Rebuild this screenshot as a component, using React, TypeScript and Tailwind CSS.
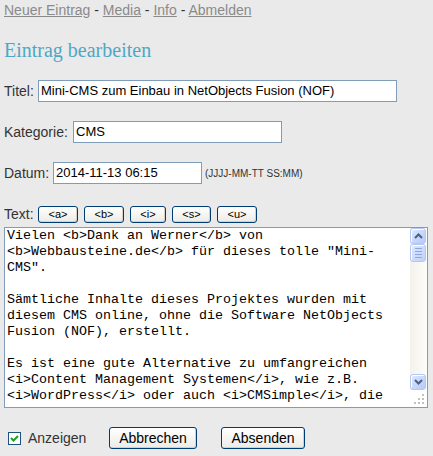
import React from "react";

const body = [
  "Vielen <b>Dank an Werner</b> von",
  '<b>Webbausteine.de</b> für dieses tolle "Mini-',
  'CMS".',
  "",
  "Sämtliche Inhalte dieses Projektes wurden mit",
  "diesem CMS online, ohne die Software NetObjects",
  "Fusion (NOF), erstellt.",
  "",
  "Es ist eine gute Alternative zu umfangreichen",
  "<i>Content Management Systemen</i>, wie z.B.",
  "<i>WordPress</i> oder auch <i>CMSimple</i>, die",
];

function Chevron({ up }: { up?: boolean }) {
  return (
    <svg width="9" height="6" viewBox="0 0 9 6">
      <polyline
        points={up ? "1,5 4.5,1.5 8,5" : "1,1 4.5,4.5 8,1"}
        fill="none"
        stroke="#4d6185"
        strokeWidth="2"
      />
    </svg>
  );
}

function ScrollButton({ up }: { up?: boolean }) {
  return (
    <div className="flex h-[16px] w-[16px] items-center justify-center rounded-[3px] border border-[#b4c8f6] bg-gradient-to-br from-[#dde7fe] to-[#b6c9f6] shadow-[inset_1px_1px_0_#ffffff]">
      <Chevron up={up} />
    </div>
  );
}

function XpButton({ label, className }: { label: string; className: string }) {
  return (
    <button
      type="button"
      className={
        "flex items-center justify-center rounded-[3px] border border-[#003c74] bg-gradient-to-b from-[#ffffff] to-[#ecebe6] text-black shadow-[inset_-1px_-1px_0_#d6d0c5] " +
        className
      }
    >
      {label}
    </button>
  );
}

function Field({
  label,
  labelWidth,
  value,
  inputWidth,
}: {
  label: string;
  labelWidth: string;
  value: string;
  inputWidth: string;
}) {
  return (
    <div className="flex h-[22px] items-center">
      <span className={"shrink-0 " + labelWidth}>{label}</span>
      <div
        className={
          "flex h-[22px] items-center border border-[#7f9db9] bg-white pl-[2px] text-[13px] text-black " +
          inputWidth
        }
      >
        {value}
      </div>
    </div>
  );
}

export default function App() {
  const links = ["Neuer Eintrag", "Media", "Info", "Abmelden"];
  return (
    <div className="min-h-screen bg-[#eaeaea] pl-[4px] pt-[2px] font-['Liberation_Sans',Arial,sans-serif] text-[14px] text-[#333333]">
      <nav className="leading-[16px]">
        {links.map((l, i) => (
          <React.Fragment key={l}>
            {i > 0 && <span className="text-[#333333]"> - </span>}
            <a className="cursor-pointer text-[#8a8a8a] underline">{l}</a>
          </React.Fragment>
        ))}
      </nav>

      <h1 className="mt-[20px] font-['Liberation_Serif','Times_New_Roman',serif] text-[20px] leading-[24px] text-[#4ea8c5]">
        Eintrag bearbeiten
      </h1>

      <div className="mt-[18px] flex flex-col gap-[19px]">
        <Field
          label="Titel:"
          labelWidth="w-[34px]"
          value="Mini-CMS zum Einbau in NetObjects Fusion (NOF)"
          inputWidth="w-[359px]"
        />
        <Field label="Kategorie:" labelWidth="w-[69px]" value="CMS" inputWidth="w-[209px]" />
        <div className="flex items-center">
          <Field
            label="Datum:"
            labelWidth="w-[49px]"
            value="2014-11-13 06:15"
            inputWidth="w-[149px]"
          />
          <span className="ml-[3px] text-[10px] text-[#333333]">(JJJJ-MM-TT SS:MM)</span>
        </div>
      </div>

      <div className="mt-[22px] flex h-[17px] items-center">
        <span className="w-[34px] shrink-0">Text:</span>
        <div className="flex gap-[6px] text-[11px] leading-none">
          <XpButton label="<a>" className="h-[17px] w-[40px]" />
          <XpButton label="<b>" className="h-[17px] w-[40px]" />
          <XpButton label="<i>" className="h-[17px] w-[36px]" />
          <XpButton label="<s>" className="h-[17px] w-[39px]" />
          <XpButton label="<u>" className="h-[17px] w-[40px]" />
        </div>
      </div>

      <div className="mt-[4px] flex h-[181px] w-[424px] border border-[#7f9db9] bg-white">
        <div className="flex-1 overflow-hidden pl-[2px] font-['Liberation_Mono','Courier_New',monospace] text-[13.33px] leading-[16px] text-black">
          {body.map((line, i) => (
            <div key={i} className="h-[16px] whitespace-pre">
              {line}
            </div>
          ))}
        </div>
        <div className="flex w-[17px] shrink-0 flex-col">
          <div className="flex flex-1 flex-col bg-gradient-to-r from-[#f3f1ea] to-[#fdfdfa]">
            <ScrollButton up />
            <div className="flex h-[18px] w-[16px] flex-col items-center justify-center gap-[2px] rounded-[3px] border border-[#b4c8f6] bg-gradient-to-br from-[#dde7fe] to-[#c0d1f8] shadow-[inset_1px_1px_0_#ffffff]">
              <div className="h-px w-[7px] bg-[#8ea6e6]" />
              <div className="h-px w-[7px] bg-[#8ea6e6]" />
              <div className="h-px w-[7px] bg-[#8ea6e6]" />
              <div className="h-px w-[7px] bg-[#8ea6e6]" />
            </div>
            <div className="flex-1" />
            <ScrollButton />
          </div>
          <div className="flex h-[17px] items-end justify-end pb-[3px] pr-[3px]">
            <svg width="10" height="10" viewBox="0 0 10 10">
              <rect x="8" y="0" width="2" height="2" fill="#c4c2b8" />
              <rect x="4" y="4" width="2" height="2" fill="#c4c2b8" />
              <rect x="8" y="4" width="2" height="2" fill="#c4c2b8" />
              <rect x="0" y="8" width="2" height="2" fill="#c4c2b8" />
              <rect x="4" y="8" width="2" height="2" fill="#c4c2b8" />
              <rect x="8" y="8" width="2" height="2" fill="#c4c2b8" />
            </svg>
          </div>
        </div>
      </div>

      <div className="mt-[19px] flex h-[22px] items-center">
        <span className="ml-[4px] flex h-[13px] w-[13px] items-center justify-center border border-[#1c5180] bg-white">
          <svg width="9" height="9" viewBox="0 0 9 9">
            <polyline points="1,4 3.5,6.5 8,2" fill="none" stroke="#21a121" strokeWidth="2" />
          </svg>
        </span>
        <span className="ml-[7px] w-[81px]">Anzeigen</span>
        <XpButton label="Abbrechen" className="h-[22px] w-[88px] text-[14px]" />
        <XpButton label="Absenden" className="ml-[24px] h-[22px] w-[84px] text-[14px]" />
      </div>
    </div>
  );
}
